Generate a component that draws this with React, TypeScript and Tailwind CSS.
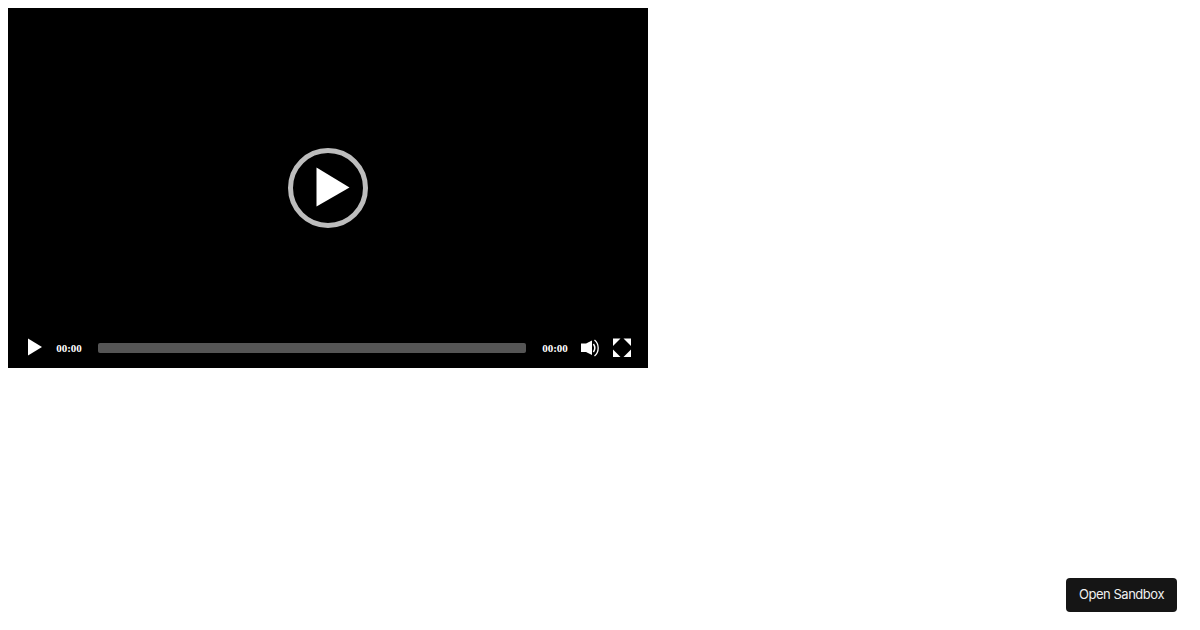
export default function App() {
  return (
    <div className="relative w-[1200px] h-[630px] bg-white overflow-hidden p-2">
      {/* Video player */}
      <div className="relative w-[640px] h-[360px] bg-black">
        {/* Big play button */}
        <div className="absolute left-[280px] top-[140px] w-20 h-20 rounded-full border-[5px] border-[#bdbdbd] flex items-center justify-center">
          <svg width="80" height="80" viewBox="0 0 80 80" className="shrink-0">
            <path d="M28.5 19.5 L61.5 39.5 L28.5 58.5 Z" fill="#fff" />
          </svg>
        </div>

        {/* Controls */}
        <div className="absolute left-0 right-0 bottom-0 h-10 flex items-center font-['Liberation_Serif',serif] text-[11px] font-bold text-white">
          <div className="w-12 flex justify-center pl-2">
            <svg width="16" height="18" viewBox="0 0 16 18" className="-mt-[2px] -ml-[2px]">
              <path d="M1 0.5 L15 9 L1 17.5 Z" fill="#fff" />
            </svg>
          </div>
          <span className="w-[26px] text-center">00:00</span>
          <div className="w-4" />
          <div className="w-[428px] h-[10px] rounded-[2px] bg-[#555555]" />
          <div className="w-4" />
          <span className="w-[26px] text-center">00:00</span>
          <div className="w-3" />
          <svg width="20" height="20" viewBox="0 0 20 20">
            <path d="M1 5.5 H6 L12 2.5 V17 L6 14 H1 Z" fill="#fff" />
            <path d="M13.4 6 C15.2 8.5 15.2 11.5 13.4 14" fill="none" stroke="#fff" strokeWidth="1.5" />
            <path d="M14.5 2 C19.4 6 19.4 14 14.5 18" fill="none" stroke="#fff" strokeWidth="1.3" />
          </svg>
          <div className="w-3" />
          <svg width="20" height="20" viewBox="0 0 20 20">
            <path d="M1 0.5 H8.5 L1 8 Z" fill="#fff" />
            <path d="M19 0.5 H11.5 L19 8 Z" fill="#fff" />
            <path d="M1 19 H8.5 L1 11.5 Z" fill="#fff" />
            <path d="M19 19 H11.5 L19 11.5 Z" fill="#fff" />
          </svg>
        </div>
      </div>

      {/* Sandbox link */}
      <a className="absolute left-[1066px] top-[578px] w-[111px] h-[34px] rounded bg-[#151515] text-[#f0f0f0] flex items-center justify-center font-['Inter',sans-serif] text-[13px] tracking-[-0.47px]">
        Open Sandbox
      </a>
    </div>
  );
}
